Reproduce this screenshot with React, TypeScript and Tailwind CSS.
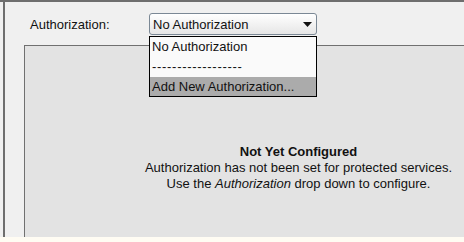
const options = ["No Authorization", "------------------", "Add New Authorization..."];

const App = () => {
  return (
    <div className="w-[464px] h-[242px] overflow-hidden bg-[#fffcf3] font-['Liberation_Sans',Arial,sans-serif] text-[13px] text-[#111]">
      <div className="relative h-[237px] border-t-2 border-[#6e6e6e] bg-[#f0f0f0]">
        <div className="ml-[3px] h-full border-l-2 border-[#6e6e6e] flex flex-col">
          {/* Header row */}
          <div className="flex items-center h-[22px] mt-[11px]">
            <span className="ml-[25px] w-[119px] leading-none">Authorization:</span>
            <div className="w-[168px] h-[22px] rounded-[3px] border border-[#7b8895] bg-gradient-to-b from-white to-[#e6e6e6] flex items-center pl-[3px] pr-[3px]">
              <span className="flex-1 leading-none">No Authorization</span>
              <svg width="9" height="5" viewBox="0 0 9 5" className="mr-[1px]">
                <polygon points="0,0 9,0 4.5,5" fill="#111" />
              </svg>
            </div>
          </div>

          {/* Content panel */}
          <div className="ml-[19px] mt-[10px] w-[548px] flex-1 border-t border-l border-[#707070] bg-[#e3e3e3] flex flex-col items-center pt-[98px] leading-[16px]">
            <div className="font-bold">Not Yet Configured</div>
            <div>Authorization has not been set for protected services.</div>
            <div>
              Use the <i>Authorization</i> drop down to configure.
            </div>
          </div>
        </div>

        {/* Open dropdown list */}
        <ul className="absolute left-[149px] top-[34px] w-[168px] border border-black bg-[#fafafa] z-10">
          {options.map((opt, i) => (
            <li
              key={i}
              className={
                i === 2
                  ? "h-[19px] pl-[2px] flex items-center bg-[#ababab]"
                  : i === 1
                    ? "h-[20px] pl-[2px] flex items-center tracking-[0.7px]"
                    : "h-[20px] pl-[2px] flex items-center"
              }
            >
              {opt}
            </li>
          ))}
        </ul>
      </div>
    </div>
  );
};

export default App;
